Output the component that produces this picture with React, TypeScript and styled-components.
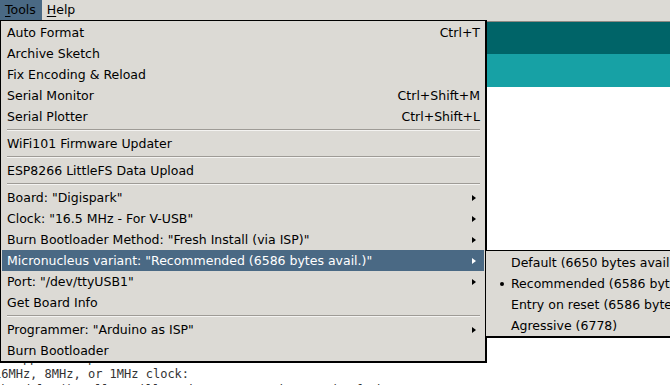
import React from 'react';
import styled, { createGlobalStyle } from 'styled-components';

const GlobalStyle = createGlobalStyle`
  html, body {
    margin: 0;
    padding: 0;
    background: #ffffff;
    overflow: hidden;
  }
  body {
    font-family: "DejaVu Sans", "Liberation Sans", sans-serif;
  }
`;

const Window = styled.div`
  position: relative;
  width: 670px;
  height: 385px;
  overflow: hidden;
  display: flex;
  flex-direction: column;
`;

const MenuBar = styled.div`
  display: flex;
  flex-shrink: 0;
  height: 21px;
  background: #dcdad5;
  font-size: 12.5px;
  color: #000;
`;

const MenuTitle = styled.div<{ active?: boolean }>`
  height: 20px;
  line-height: 20px;
  padding: 0 6px 0 5px;
  background: ${p => (p.active ? '#4a6984' : 'transparent')};
`;

const Mnemonic = styled.span`
  text-decoration: underline;
  text-underline-offset: 2px;
`;

const Toolbar = styled.div`
  flex-shrink: 0;
  height: 32px;
  background: #006468;
  border-top: 1px solid #8c8983;
`;

const Tabs = styled.div`
  flex-shrink: 0;
  height: 33px;
  background: #17a1a5;
`;

const Editor = styled.div`
  flex: 1;
  min-height: 0;
  overflow: hidden;
  background: #ffffff;
  padding-top: 7px;
  font-family: "DejaVu Sans Mono", "Liberation Mono", monospace;
  font-size: 12px;
  line-height: 16px;
  color: #333333;
  white-space: pre;
`;

const CodeLine = styled.div`
  margin-left: -6px;
  height: 16px;
`;

const Dropdown = styled.div<{ left: number; top: number; width: number }>`
  position: absolute;
  left: ${p => p.left}px;
  top: ${p => p.top}px;
  width: ${p => p.width}px;
  box-sizing: border-box;
  background: #dcdad5;
  border: 1px solid #000;
  border-right-width: 2px;
  border-bottom-width: 2px;
  padding: 1px 1px 0 1px;
  font-size: 12.5px;
  color: #000;
  overflow: hidden;
`;

const Item = styled.div<{ active?: boolean; indent?: number }>`
  position: relative;
  display: flex;
  align-items: center;
  justify-content: space-between;
  height: 21px;
  padding: 0 4px 0 ${p => p.indent ?? 5}px;
  background: ${p => (p.active ? '#4a6984' : 'transparent')};
  color: ${p => (p.active ? '#ffffff' : '#000000')};
  white-space: nowrap;
`;

const Shortcut = styled.span`
  margin-left: 20px;
`;

const Arrow = styled.span<{ active?: boolean }>`
  width: 0;
  height: 0;
  margin-right: 4px;
  border-top: 3.5px solid transparent;
  border-bottom: 3.5px solid transparent;
  border-left: 4px solid ${p => (p.active ? '#ffffff' : '#000000')};
`;

const Separator = styled.div`
  height: 6px;
  display: flex;
  flex-direction: column;
  justify-content: center;
  padding: 0 4px 0 5px;

  &::before {
    content: '';
    display: block;
    height: 1px;
    background: #9e9b96;
  }
  &::after {
    content: '';
    display: block;
    height: 1px;
    background: #f4f3f1;
  }
`;

const Bullet = styled.span`
  position: absolute;
  left: 13px;
  top: 9px;
  width: 4px;
  height: 4px;
  border-radius: 50%;
  background: #000;
`;

type Entry =
  | { kind: 'item'; label: string; shortcut?: string; sub?: boolean; active?: boolean }
  | { kind: 'sep' };

const toolsMenu: Entry[] = [
  { kind: 'item', label: 'Auto Format', shortcut: 'Ctrl+T' },
  { kind: 'item', label: 'Archive Sketch' },
  { kind: 'item', label: 'Fix Encoding & Reload' },
  { kind: 'item', label: 'Serial Monitor', shortcut: 'Ctrl+Shift+M' },
  { kind: 'item', label: 'Serial Plotter', shortcut: 'Ctrl+Shift+L' },
  { kind: 'sep' },
  { kind: 'item', label: 'WiFi101 Firmware Updater' },
  { kind: 'sep' },
  { kind: 'item', label: 'ESP8266 LittleFS Data Upload' },
  { kind: 'sep' },
  { kind: 'item', label: 'Board: "Digispark"', sub: true },
  { kind: 'item', label: 'Clock: "16.5 MHz - For V-USB"', sub: true },
  { kind: 'item', label: 'Burn Bootloader Method: "Fresh Install (via ISP)"', sub: true },
  { kind: 'item', label: 'Micronucleus variant: "Recommended (6586 bytes avail.)"', sub: true, active: true },
  { kind: 'item', label: 'Port: "/dev/ttyUSB1"', sub: true },
  { kind: 'item', label: 'Get Board Info' },
  { kind: 'sep' },
  { kind: 'item', label: 'Programmer: "Arduino as ISP"', sub: true },
  { kind: 'item', label: 'Burn Bootloader' },
];

const variants = [
  { label: 'Default (6650 bytes avail.)', checked: false },
  { label: 'Recommended (6586 bytes avail.)', checked: true },
  { label: 'Entry on reset (6586 bytes avail.)', checked: false },
  { label: 'Agressive (6778)', checked: false },
];

const code = [
  '/*',
  '  Blink',
  '',
  '  Turns an LED on for one second,',
  '  then off for one second, repeatedly.',
  '',
  '  Digispark (ATtiny85) version.',
  '',
  '  The board can run from the',
  '  internal PLL at 16.5MHz for USB.',
  '',
  '  When the core is configured',
  '  without USB support, the',
  '  internal oscillator can be used',
  '  instead.',
  '',
  '  Supported speeds are the',
  '16MHz, 8MHz, or 1MHz clock:',
  'the delay() calls still work as expected on each of them.',
];

export default function App() {
  return (
    <>
      <GlobalStyle />
      <Window>
        <MenuBar>
          <MenuTitle active>
            <Mnemonic>T</Mnemonic>ools
          </MenuTitle>
          <MenuTitle>
            <Mnemonic>H</Mnemonic>elp
          </MenuTitle>
        </MenuBar>
        <Toolbar />
        <Tabs />
        <Editor>
          {code.map((line, i) => (
            <CodeLine key={i}>{line}</CodeLine>
          ))}
        </Editor>

        <Dropdown left={0} top={20} width={487}>
          {toolsMenu.map((e, i) =>
            e.kind === 'sep' ? (
              <Separator key={i} />
            ) : (
              <Item key={i} active={e.active}>
                <span>{e.label}</span>
                {e.shortcut && <Shortcut>{e.shortcut}</Shortcut>}
                {e.sub && <Arrow active={e.active} />}
              </Item>
            )
          )}
        </Dropdown>

        <Dropdown left={485} top={250} width={230}>
          {variants.map(v => (
            <Item key={v.label} indent={24}>
              {v.checked && <Bullet />}
              <span>{v.label}</span>
            </Item>
          ))}
        </Dropdown>
      </Window>
    </>
  );
}
